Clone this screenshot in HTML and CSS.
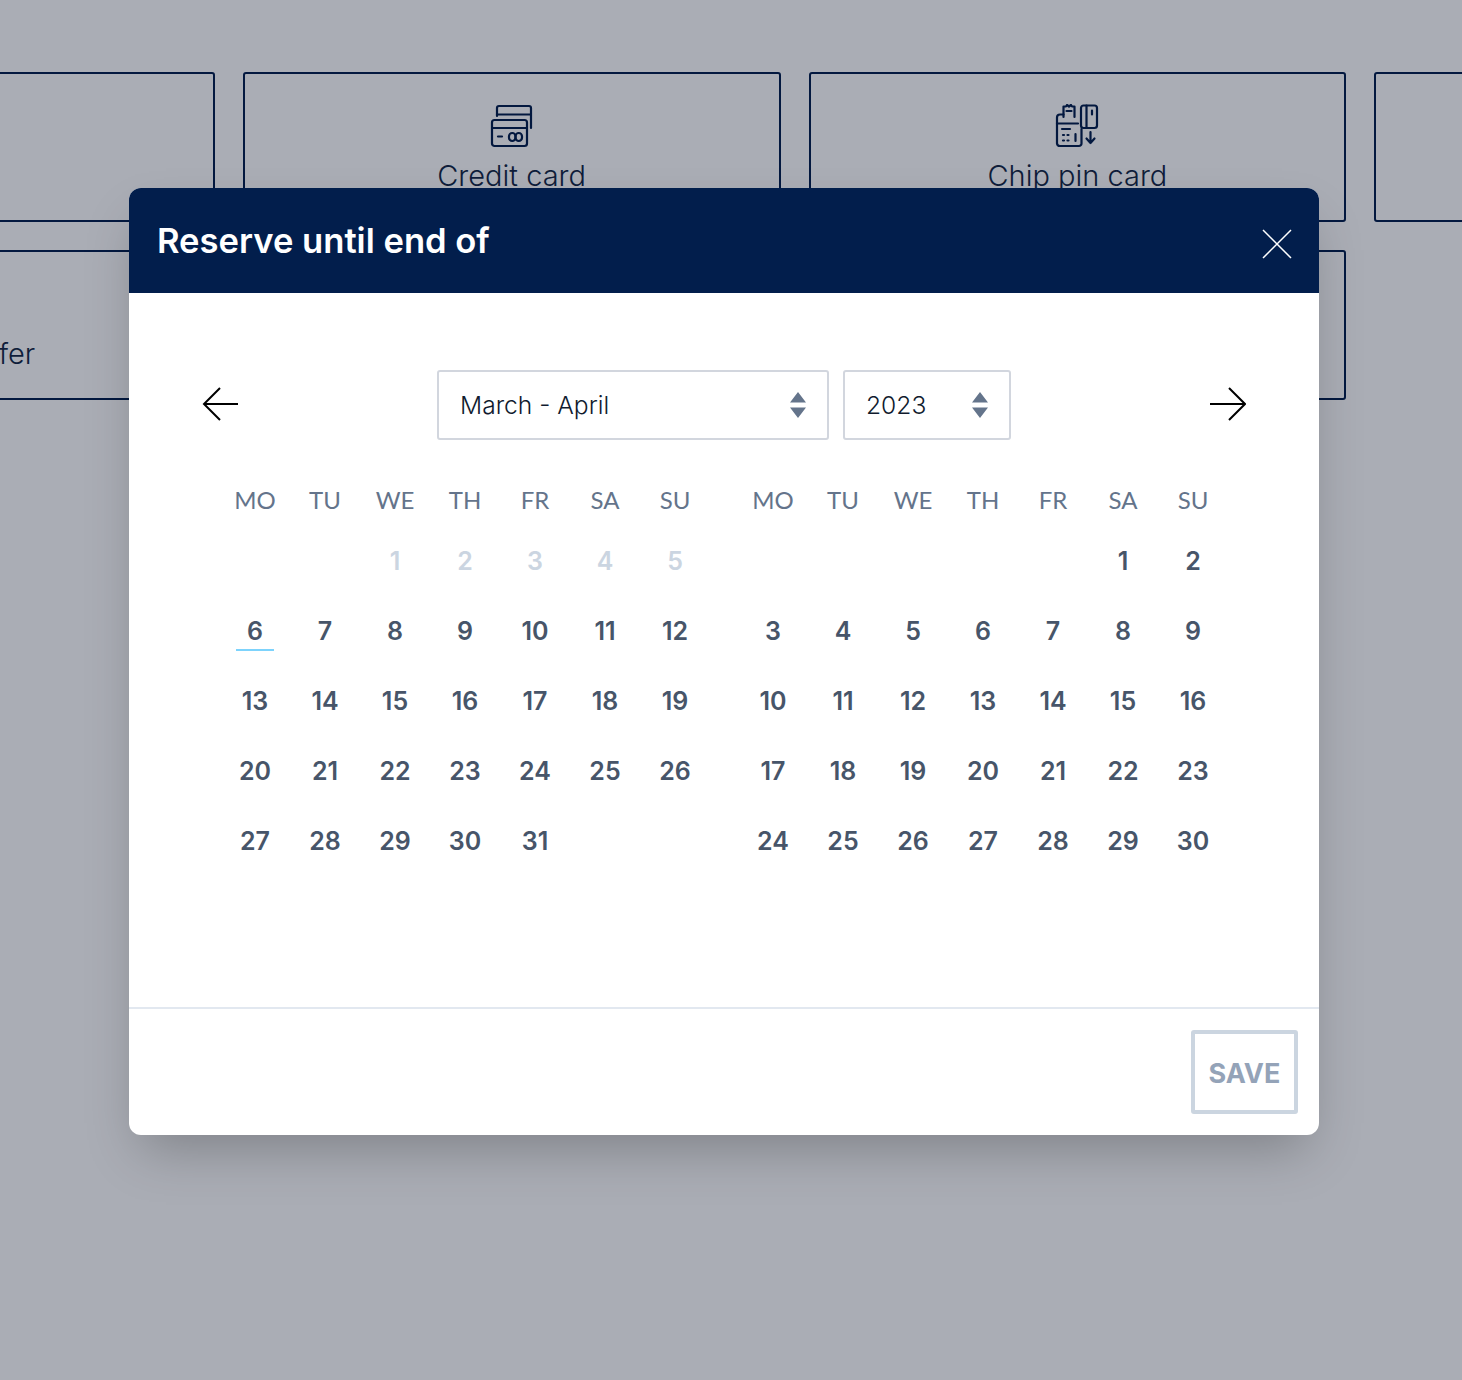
FILE: index.html
```html
<!DOCTYPE html>
<html lang="en">

<head>
    <meta charset="UTF-8">
    <meta name="viewport" content="width=device-width, initial-scale=1.0">
    <title>Reserve until end of</title>
    <link rel="stylesheet" href="styles.css">
</head>

<body>

    <!-- Payment options behind the dialog -->
    <div class="tiles">
        <div class="tile"></div>
        <div class="tile">
            <svg class="tile-icon" width="44" height="44" viewBox="0 0 44 44" fill="none" stroke="currentColor" stroke-width="2.200" stroke-linecap="round" stroke-linejoin="round">
                <path d="M7 12V4a2 2 0 0 1 2-2h30a2 2 0 0 1 2 2v20"/>
                <path d="M7 10.500h34"/>
                <rect x="2" y="16" width="35" height="26" rx="2.500"/>
                <path d="M2 24h35"/>
                <path d="M8 32.500h4"/>
                <rect x="19" y="29" width="6.500" height="8" rx="3.200"/>
                <rect x="25.500" y="29" width="6.500" height="8" rx="3.200"/>
            </svg>
            <span>Credit card</span>
        </div>
        <div class="tile">
            <svg class="tile-icon" width="44" height="44" viewBox="0 0 44 44" fill="none" stroke="currentColor" stroke-width="2.200" stroke-linecap="round" stroke-linejoin="round">
                <path d="M8.500 13V2.500l2.500 0 1-1.500 2 1.500 2-1.500 1 1.500h2.500V13"/>
                <path d="M11.500 7h5"/>
                <path d="M8.500 10.500H5A3 3 0 0 0 2 13.500V39.500A3 3 0 0 0 5 42h19a2.500 2.500 0 0 0 2.500-2.500V25"/>
                <path d="M2 19.500h21"/>
                <path d="M7 25h8"/>
                <path d="M8 31h1M12.500 31h1M8 36.500h1M12.500 36.500h1M20.500 30v7"/>
                <rect x="26" y="1.500" width="16" height="22.500" rx="2.500"/>
                <path d="M31.500 1.500V24M37 6.500v4"/>
                <path d="M35.500 28v11M31.500 34.500l4 4.500 4-4.500"/>
            </svg>
            <span>Chip pin card</span>
        </div>
        <div class="tile"></div>
        <div class="tile"><span>Bank transfer</span></div>
        <div class="tile"></div>
        <div class="tile"></div>
    </div>

    <!-- Dialog -->
    <div class="modal">
        <div class="modal-header">
            <h2>Reserve until end of</h2>
            <svg class="close" width="30" height="30" viewBox="0 0 30 30" fill="none" stroke="#fff" stroke-width="1.500">
                <path d="M1 1l28 28M29 1L1 29"/>
            </svg>
        </div>

        <div class="modal-body">
            <div class="cal-nav">
                <svg class="arrow" width="36" height="34" viewBox="0 0 36 34" fill="none" stroke="#000" stroke-width="2">
                    <path d="M36 17H2M18 1L2 17l16 16"/>
                </svg>
                <div class="selects">
                    <div class="select select-month">
                        <span>March - April</span>
                        <svg width="18" height="26" viewBox="0 0 18 26" fill="#64748b"><path d="M9 0l8 10.500H1zM9 26L1 15.500h16z"/></svg>
                    </div>
                    <div class="select select-year">
                        <span>2023</span>
                        <svg width="18" height="26" viewBox="0 0 18 26" fill="#64748b"><path d="M9 0l8 10.500H1zM9 26L1 15.500h16z"/></svg>
                    </div>
                </div>
                <svg class="arrow" width="36" height="34" viewBox="0 0 36 34" fill="none" stroke="#000" stroke-width="2">
                    <path d="M0 17h35M19 1l16 16-16 16"/>
                </svg>
            </div>

            <div class="calendars" id="calendars"></div>
        </div>

        <div class="modal-footer">
            <button class="save-button">SAVE</button>
        </div>
    </div>

    <script>
        const months = [
            { blanks: 2, days: 31, muted: 5, today: 6 },
            { blanks: 5, days: 30, muted: 0, today: 0 }
        ];
        const weekdays = ['MO', 'TU', 'WE', 'TH', 'FR', 'SA', 'SU'];

        const container = document.getElementById('calendars');

        months.forEach(month => {
            const cal = document.createElement('div');
            cal.classList.add('calendar');

            let html = '';
            weekdays.forEach(day => {
                html += `<div class="weekday">${day}</div>`;
            });
            for (let i = 0; i < month.blanks; i++) {
                html += '<div class="day"></div>';
            }
            for (let d = 1; d <= month.days; d++) {
                let cls = 'day';
                if (d <= month.muted) cls += ' muted';
                if (d === month.today) cls += ' today';
                html += `<div class="${cls}"><span>${d}</span></div>`;
            }

            cal.innerHTML = html;
            container.appendChild(cal);
        });
    </script>

</body>

</html>
```

FILE: styles.css
```css
* {
    margin: 0;
    padding: 0;
    box-sizing: border-box;
}

body {
    font-family: Inter, "Liberation Sans", sans-serif;
    background-color: #aaadb5;
    height: 1380px;
    overflow: hidden;
}

/* Payment tiles */
.tiles {
    display: grid;
    grid-template-columns: repeat(4, 537.75px);
    gap: 28px;
    width: 2300px;
    margin-left: -323px;
    padding-top: 72px;
}

.tile {
    height: 150px;
    border: 2px solid #03183f;
    border-radius: 3px;
    display: flex;
    flex-direction: column;
    align-items: center;
    justify-content: flex-start;
    color: #0f1d3a;
    font-size: 29px;
    font-weight: 300;
    padding-top: 30px;
}

.tile-icon {
    color: #03183f;
    margin-bottom: 10px;
}

.tile:nth-child(5) {
    padding-top: 84px;
}

/* Dialog */
.modal {
    position: absolute;
    left: 129px;
    top: 188px;
    width: 1190px;
    height: 947px;
    background-color: white;
    border-radius: 12px;
    box-shadow: 0 25px 50px -12px rgba(0, 0, 0, 0.25);
    overflow: hidden;
}

.modal-header {
    height: 105px;
    background-color: #021e4c;
    color: white;
    display: flex;
    justify-content: space-between;
    align-items: center;
    padding: 0 27px 0 28px;
}

.modal-header h2 {
    font-size: 34.600px;
    font-weight: 600;
    margin-top: -2px;
}

.close {
    margin-top: 6px;
}

.modal-body {
    height: 714px;
    padding: 77px 73px 0 73px;
}

.cal-nav {
    display: flex;
    justify-content: space-between;
    align-items: center;
    height: 70px;
}

.arrow {
    margin-top: -2px;
}

.selects {
    display: flex;
    gap: 14px;
}

.select {
    height: 70px;
    border: 2px solid #d2d6de;
    border-radius: 3px;
    display: flex;
    justify-content: space-between;
    align-items: center;
    padding: 0 20px 0 21px;
    font-size: 24.600px;
    font-weight: 300;
    color: #101b2e;
}

.select-month {
    width: 392px;
}

.select-year {
    width: 168px;
}

.calendars {
    display: flex;
    justify-content: center;
    gap: 28px;
    margin-top: 32px;
}

.calendar {
    display: grid;
    grid-template-columns: repeat(7, 70px);
    grid-auto-rows: 70px;
    grid-template-rows: 54px;
}

.weekday {
    display: flex;
    align-items: center;
    justify-content: center;
    font-family: Lato, sans-serif;
    font-size: 24px;
    color: #64748b;
}

.day {
    display: flex;
    align-items: center;
    justify-content: center;
    font-size: 25px;
    font-weight: 600;
    color: #475569;
}

.day.muted {
    color: #cbd5e1;
}

.day.today span {
    display: block;
    width: 38px;
    text-align: center;
    padding-bottom: 3px;
    margin-top: 4px;
    border-bottom: 2px solid #7dd3fc;
}

.modal-footer {
    height: 128px;
    border-top: 2px solid #e2e8f0;
    display: flex;
    justify-content: flex-end;
    padding: 21px 21px 0 0;
}

.save-button {
    width: 107px;
    height: 84px;
    padding-top: 2px;
    background-color: white;
    border: 4px solid #cbd5e0;
    border-radius: 3px;
    color: #94a3b8;
    font-family: Inter, sans-serif;
    font-size: 27px;
    font-weight: 700;
}
```
